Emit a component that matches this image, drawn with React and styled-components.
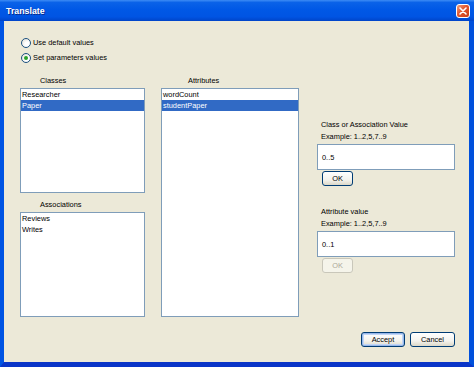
import React, { useState } from "react";
import styled, { createGlobalStyle } from "styled-components";

const GlobalStyle = createGlobalStyle`
  html, body {
    margin: 0;
    padding: 0;
    background: #ECE9D8;
  }
  * {
    box-sizing: border-box;
  }
`;

const Window = styled.div`
  width: 474px;
  height: 367px;
  display: flex;
  flex-direction: column;
  font-family: "Liberation Sans", Arial, sans-serif;
  font-size: 7.4px;
  color: #000;
  overflow: hidden;
`;

const TitleBar = styled.div`
  height: 21px;
  flex-shrink: 0;
  display: flex;
  align-items: center;
  justify-content: space-between;
  padding: 0 4px 0 6px;
  background: linear-gradient(
    #3d8cf5 0%,
    #0a62e8 12%,
    #0058e6 45%,
    #0054e3 80%,
    #0044c8 100%
  );
  color: #fff;
  font-size: 8.8px;
  font-weight: 700;
  text-shadow: 1px 1px 0 #0a2a8a;
`;

const CloseButton = styled.div`
  width: 14px;
  height: 14px;
  border: 1px solid #fff;
  border-radius: 3px;
  background: linear-gradient(135deg, #f0a080 0%, #e2562c 45%, #c83e18 100%);
  display: flex;
  align-items: center;
  justify-content: center;
`;

const Frame = styled.div`
  flex: 1;
  display: flex;
  border-left: 4px solid #0054e3;
  border-right: 6px solid #0050dc;
  border-bottom: 5px solid #0a35c8;
`;

const Body = styled.div`
  flex: 1;
  display: flex;
  flex-direction: column;
  background: #ece9d8;
  padding: 14px 14px 15px 16px;
`;

const RadioGroup = styled.div`
  display: flex;
  flex-direction: column;
  padding-left: 1px;
`;

const RadioRow = styled.label`
  height: 15px;
  display: flex;
  align-items: center;
  gap: 2px;
  cursor: default;
`;

const RadioCircle = styled.span`
  width: 10px;
  height: 10px;
  border-radius: 50%;
  border: 1px solid #1c5180;
  background: radial-gradient(circle at 65% 65%, #fff 30%, #dcd9cd 100%);
  display: flex;
  align-items: center;
  justify-content: center;
  &::after {
    content: "";
    width: 4px;
    height: 4px;
    border-radius: 50%;
    background: ${(p) => (p.$checked ? "#2aa12a" : "transparent")};
  }
`;

const Main = styled.div`
  display: flex;
  margin-top: 9px;
`;

const Column = styled.div`
  width: ${(p) => p.$width}px;
  margin-left: ${(p) => p.$ml || 0}px;
  display: flex;
  flex-direction: column;
  padding-top: ${(p) => p.$pt || 0}px;
`;

const Label = styled.div`
  height: 14px;
  line-height: 14px;
  padding-left: ${(p) => p.$indent}px;
  margin-top: ${(p) => p.$mt || 0}px;
`;

const List = styled.div`
  height: ${(p) => p.$height}px;
  background: #fff;
  border: 1px solid #7f9db9;
  padding-top: 0px;
`;

const ListItem = styled.div`
  height: 11px;
  line-height: 11px;
  padding-left: 1px;
  background: ${(p) => (p.$selected ? "#316ac5" : "transparent")};
  color: ${(p) => (p.$selected ? "#fff" : "#000")};
`;

const Text = styled.div`
  height: 12px;
  line-height: 12px;
  padding-left: 4px;
`;

const Field = styled.div`
  height: 26px;
  margin-top: 1px;
  background: #fff;
  border: 1px solid #7f9db9;
  padding-left: 4px;
  display: flex;
  align-items: center;
`;

const Button = styled.button`
  height: 15px;
  width: ${(p) => p.$width}px;
  margin-left: ${(p) => p.$ml || 0}px;
  margin-top: ${(p) => p.$mt || 0}px;
  padding: 0;
  font-family: inherit;
  font-size: 7.4px;
  border-radius: 3px;
  border: 1px solid ${(p) => (p.disabled ? "#c9c7ba" : "#003c74")};
  color: ${(p) => (p.disabled ? "#aca899" : "#000")};
  background: ${(p) =>
    p.disabled
      ? "#f5f4ea"
      : "linear-gradient(#ffffff 0%, #f4f3ee 60%, #dcd8c8 100%)"};
  box-shadow: ${(p) =>
    p.$default ? "inset 0 0 0 1px #98b8ea, inset 0 0 0 2px #c2d6f6" : "none"};
  cursor: default;
`;

const Footer = styled.div`
  margin-top: auto;
  display: flex;
  justify-content: flex-end;
  gap: 5px;
  padding-right: 0px;
`;

const CloseIcon = () => (
  <svg width="8" height="8" viewBox="0 0 8 8">
    <path d="M1 1 L7 7 M7 1 L1 7" stroke="#fff" strokeWidth="1.6" strokeLinecap="round" />
  </svg>
);

const classes = ["Researcher", "Paper"];
const associations = ["Reviews", "Writes"];
const attributes = ["wordCount", "studentPaper"];

export default function App() {
  const [mode, setMode] = useState("set");
  const [cls, setCls] = useState("Paper");
  const [attr, setAttr] = useState("studentPaper");

  return (
    <>
      <GlobalStyle />
      <Window>
        <TitleBar>
          <span>Translate</span>
          <CloseButton>
            <CloseIcon />
          </CloseButton>
        </TitleBar>
        <Frame>
          <Body>
            <RadioGroup>
              <RadioRow onClick={() => setMode("default")}>
                <RadioCircle $checked={mode === "default"} />
                <span>Use default values</span>
              </RadioRow>
              <RadioRow onClick={() => setMode("set")}>
                <RadioCircle $checked={mode === "set"} />
                <span>Set parameters values</span>
              </RadioRow>
            </RadioGroup>

            <Main>
              <Column $width={125}>
                <Label $indent={20}>Classes</Label>
                <List $height={105}>
                  {classes.map((c) => (
                    <ListItem key={c} $selected={cls === c} onClick={() => setCls(c)}>
                      {c}
                    </ListItem>
                  ))}
                </List>
                <Label $indent={20} $mt={5}>Associations</Label>
                <List $height={105}>
                  {associations.map((a) => (
                    <ListItem key={a}>{a}</ListItem>
                  ))}
                </List>
              </Column>

              <Column $width={138} $ml={16}>
                <Label $indent={27}>Attributes</Label>
                <List $height={229}>
                  {attributes.map((a) => (
                    <ListItem key={a} $selected={attr === a} onClick={() => setAttr(a)}>
                      {a}
                    </ListItem>
                  ))}
                </List>
              </Column>

              <Column $width={138} $ml={18} $pt={45}>
                <Text>Class or Association Value</Text>
                <Text>Example: 1..2,5,7..9</Text>
                <Field>0..5</Field>
                <Button $width={31} $ml={5} $mt={1}>OK</Button>
                <Text style={{ marginTop: 20 }}>Attribute value</Text>
                <Text>Example: 1..2,5,7..9</Text>
                <Field>0..1</Field>
                <Button $width={31} $ml={5} $mt={1} disabled>OK</Button>
              </Column>
            </Main>

            <Footer>
              <Button $width={44} $default>Accept</Button>
              <Button $width={45}>Cancel</Button>
            </Footer>
          </Body>
        </Frame>
      </Window>
    </>
  );
}
